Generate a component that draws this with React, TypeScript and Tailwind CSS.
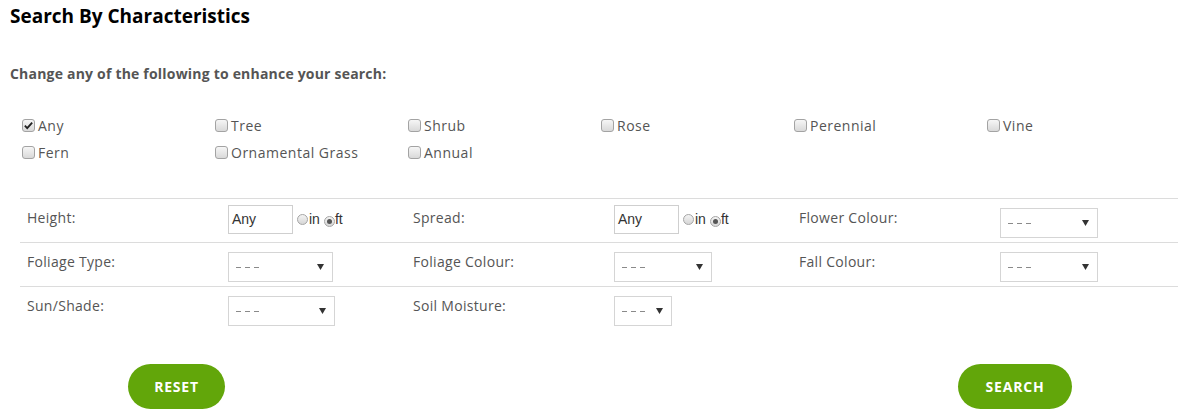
import React from "react";

const font = "font-['Open_Sans',_'Liberation_Sans',_sans-serif]";

function Checkbox({ checked }: { checked?: boolean }) {
  return (
    <span className="relative inline-flex h-[13px] w-[13px] shrink-0 items-center justify-center rounded-[3px] border border-[#a3a3a3] bg-gradient-to-b from-[#f6f6f6] to-[#d9d9d9]">
      {checked && (
        <svg viewBox="0 0 12 12" className="h-[11px] w-[11px]">
          <path d="M2 6.2 L4.6 8.8 L10 2.8" fill="none" stroke="#222" strokeWidth="2" />
        </svg>
      )}
    </span>
  );
}

function Radio({ checked }: { checked?: boolean }) {
  return (
    <span className="inline-flex h-[11px] w-[11px] shrink-0 items-center justify-center rounded-full border border-[#a5a5a5] bg-gradient-to-b from-[#f4f4f4] to-[#d6d6d6]">
      {checked && <span className="h-[5px] w-[5px] rounded-full bg-[#555]" />}
    </span>
  );
}

function Dashes() {
  return (
    <span className="flex gap-[4px]">
      <span className="h-px w-[5px] bg-[#8a8a8a]" />
      <span className="h-px w-[5px] bg-[#8a8a8a]" />
      <span className="h-px w-[5px] bg-[#8a8a8a]" />
    </span>
  );
}

function Select({ w }: { w: string }) {
  return (
    <div className={`flex h-[30px] ${w} items-center justify-between border border-[#d5d5d5] bg-white pl-[7px] pr-[8px]`}>
      <Dashes />
      <svg viewBox="0 0 7 6" className="h-[6px] w-[7px]">
        <path d="M0 0 H7 L3.5 6 Z" fill="#333" />
      </svg>
    </div>
  );
}

function UnitInput() {
  return (
    <div className="-mt-[3px] flex items-center">
      <div className="flex h-[29px] w-[65px] items-center border border-[#cfcfcf] pl-[3px] font-['Liberation_Sans',_sans-serif] text-[14px] text-[#333]">
        Any
      </div>
      <div className="ml-[4px] flex items-center font-['Liberation_Sans',_sans-serif] text-[14px] text-[#333]">
        <Radio />
        <span className="ml-[1px]">in</span>
        <span className="ml-[4px]"><Radio checked /></span>
        <span>ft</span>
      </div>
    </div>
  );
}

const types = [
  ["Any", true],
  ["Tree", false],
  ["Shrub", false],
  ["Rose", false],
  ["Perennial", false],
  ["Vine", false],
  ["Fern", false],
  ["Ornamental Grass", false],
  ["Annual", false],
] as const;

function Label({ children }: { children: React.ReactNode }) {
  return <div className="w-[201px] pl-[7px] pt-[9px] text-[14px] leading-[19px] tracking-[0.3px] text-[#555]">{children}</div>;
}

function Cell({ children }: { children?: React.ReactNode }) {
  return <div className="w-[185px] pl-[7px] pt-[9px]">{children}</div>;
}

export default function App() {
  return (
    <div className={`${font} h-[416px] w-[1193px] overflow-hidden bg-white px-[10px]`}>
      <h2 className="flex h-[32px] items-center text-[19px] font-bold text-black">
        Search By Characteristics
      </h2>
      <p className="mt-[32px] h-[20px] text-[14px] leading-[20px] font-bold tracking-[0.2px] text-[#555]">
        Change any of the following to enhance your search:
      </p>
      <div className="mt-[28px] grid grid-cols-[repeat(6,193px)]">
        {types.map(([t, c]) => (
          <div key={t} className="flex h-[27px] items-center pl-[12px] text-[14px] tracking-[0.5px] text-[#555]">
            <Checkbox checked={c} />
            <span className="ml-[3px]">{t}</span>
          </div>
        ))}
      </div>
      <div className="ml-[10px] mt-[32px] w-[1158px]">
        <div className="flex h-[44px] border-t border-[#dcdcdc]">
          <Label>Height:</Label>
          <Cell><UnitInput /></Cell>
          <Label>Spread:</Label>
          <Cell><UnitInput /></Cell>
          <Label>Flower Colour:</Label>
          <Cell><Select w="w-[98px]" /></Cell>
        </div>
        <div className="flex h-[44px] border-t border-[#dcdcdc]">
          <Label>Foliage Type:</Label>
          <Cell><Select w="w-[105px]" /></Cell>
          <Label>Foliage Colour:</Label>
          <Cell><Select w="w-[98px]" /></Cell>
          <Label>Fall Colour:</Label>
          <Cell><Select w="w-[98px]" /></Cell>
        </div>
        <div className="flex h-[44px] border-t border-[#dcdcdc]">
          <Label>Sun/Shade:</Label>
          <Cell><Select w="w-[107px]" /></Cell>
          <Label>Soil Moisture:</Label>
          <Cell><Select w="w-[58px]" /></Cell>
          <Label>{""}</Label>
          <Cell />
        </div>
      </div>
      <div className="mt-[34px] flex justify-between pl-[118px] pr-[111px]">
        <button className="h-[45px] w-[97px] rounded-full bg-[#62a60a] text-[14px] font-bold tracking-[0.8px] text-white">
          RESET
        </button>
        <button className="h-[45px] w-[114px] rounded-full bg-[#62a60a] text-[14px] font-bold tracking-[0.8px] text-white">
          SEARCH
        </button>
      </div>
    </div>
  );
}
